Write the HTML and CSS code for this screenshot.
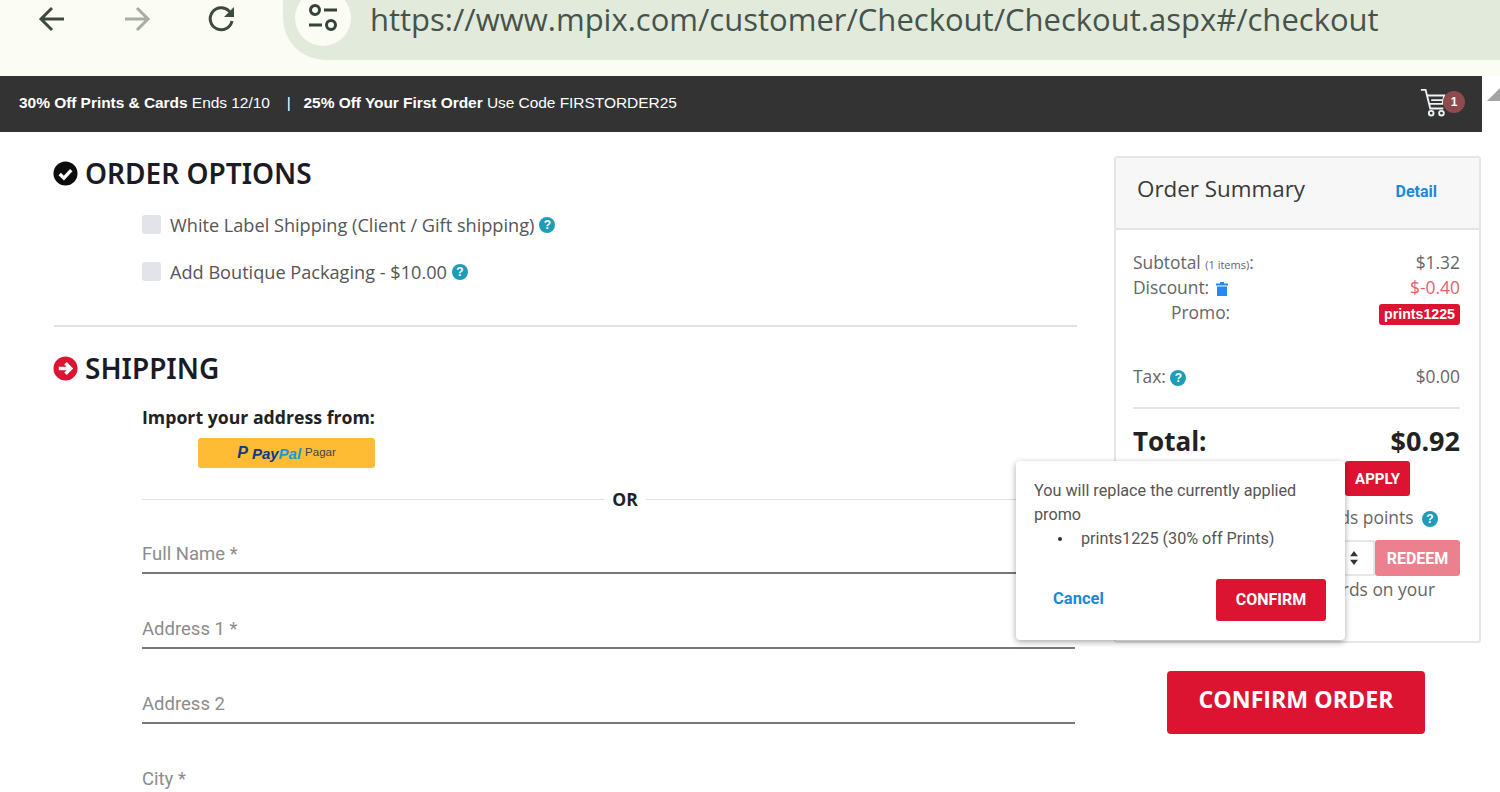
FILE: index.html
```html
<!DOCTYPE html>
<html lang="en">
<head>
<meta charset="utf-8">
<title>Checkout</title>
<link rel="stylesheet" href="styles.css">
</head>
<body>
<header class="chrome">
  <nav class="nav">
    <svg class="nav-icon" viewBox="0 0 30 30"><path d="M27 15H4M15 4 4 15l11 11"/></svg>
    <svg class="nav-icon dim" viewBox="0 0 30 30"><path d="M3 15h23M15 4l11 11-11 11"/></svg>
    <svg class="nav-icon" viewBox="0 0 30 30"><path d="M25 17a11 11 0 1 1-3-10l3 3"/><path class="solid" d="M27 3v10H17z"/></svg>
  </nav>
  <div class="omnibox">
    <span class="tune"><svg viewBox="0 0 32 32"><circle cx="8" cy="8" r="4.5"/><path d="M17 8h13M2 23h13"/><circle cx="24" cy="23" r="4.5"/></svg></span>
    <span class="url">https://www.mpix.com/customer/Checkout/Checkout.aspx#/checkout</span>
  </div>
</header>

<div class="promo-bar">
  <p class="promo-text"><b>30% Off Prints &amp; Cards</b> Ends 12/10 &nbsp;&nbsp; | &nbsp; <b>25% Off Your First Order</b> Use Code FIRSTORDER25</p>
  <div class="cart">
    <svg viewBox="0 0 30 32"><path d="M1 3h5l5 20h14M8 9h18l-2 9H10M12 14h13"/><circle cx="12" cy="28" r="2.5"/><circle cx="23" cy="28" r="2.5"/></svg>
    <span class="cart-badge">1</span>
  </div>
</div>
<div class="scroll-arrow"></div>

<main class="page">
  <section class="form-col">
    <h2 class="step first"><svg class="step-icon" viewBox="0 0 26 26"><circle cx="13" cy="13" r="12.5"/><path class="check" d="m7 13.5 4.300 4.300L19 9.500"/></svg>ORDER OPTIONS</h2>
    <div class="options">
      <label class="option"><span class="box"></span>White Label Shipping (Client / Gift shipping) <span class="help">?</span></label>
      <label class="option"><span class="box"></span>Add Boutique Packaging - $10.00 <span class="help">?</span></label>
    </div>
    <hr class="rule">
    <h2 class="step"><svg class="step-icon red" viewBox="0 0 26 26"><circle cx="13" cy="13" r="12.5"/><path class="check" d="M6 13h12M13 7.500l5.500 5.500-5.500 5.500"/></svg>SHIPPING</h2>
    <div class="shipping">
      <p class="import">Import your address from:</p>
      <div class="paypal"><span class="pp-mark">P</span><span class="pp-pay">Pay</span><span class="pp-pal">Pal</span><span class="pp-pagar">Pagar</span></div>
      <div class="or"><span>OR</span></div>
      <div class="field">Full Name *</div>
      <div class="field">Address 1 *</div>
      <div class="field">Address 2</div>
      <div class="field">City *</div>
    </div>
  </section>

  <aside class="side">
    <section class="card">
      <div class="card-head"><h3>Order Summary</h3><a class="link detail">Detail</a></div>
      <div class="card-body">
        <div class="row"><span>Subtotal <small>(1 items)</small>:</span><span>$1.32</span></div>
        <div class="row"><span>Discount: <svg class="trash" viewBox="0 0 12 14"><path d="M4 0h4v1.500h4v2H0v-2h4zM1 4.500h10V14H1z"/></svg></span><span class="neg">$-0.40</span></div>
        <div class="row promo-row"><span class="promo-label">Promo:</span><span class="chip">prints1225</span></div>
        <div class="row tax"><span>Tax: <span class="help">?</span></span><span>$0.00</span></div>
        <hr class="sum-rule">
        <div class="row total"><span>Total:</span><span class="total-value">$0.92</span></div>
        <div class="apply-row"><span class="btn apply">APPLY</span></div>
        <p class="reward">Redeem rewards points <span class="help">?</span></p>
        <div class="redeem-row"><span class="num"><svg viewBox="0 0 10 16"><path d="M5 0l4.500 6h-9zM5 16 .5 10h9z"/></svg></span><span class="btn redeem">REDEEM</span></div>
        <p class="reward-note">You have 0 rewards on your</p>
      </div>
    </section>
    <div class="confirm-wrap"><span class="btn confirm-order">CONFIRM ORDER</span></div>
  </aside>
</main>

<div class="popover">
  <p>You will replace the currently applied promo</p>
  <ul><li>prints1225 (30% off Prints)</li></ul>
  <div class="pop-actions"><a class="link cancel">Cancel</a><span class="btn pop-confirm">CONFIRM</span></div>
</div>
</body>
</html>
```
FILE: styles.css
```css
* { box-sizing: border-box; }
html, body { height: 792px; overflow: hidden; }
body { margin: 0; background: #fff; color: #333; font-family: "Open Sans", "Noto Sans", sans-serif; position: relative; }
p, h2, h3, ul { margin: 0; }

.chrome { height: 76px; background: #fbfdf5; display: flex; align-items: flex-start; overflow: hidden; }
.nav { display: flex; gap: 55px; padding: 4px 0 0 37px; width: 283px; flex: none; }
.nav-icon { width: 30px; height: 30px; fill: none; stroke: #3d4a40; stroke-width: 3; }
.nav-icon.dim { stroke: #a7aea6; }
.nav-icon .solid { fill: #3d4a40; stroke: none; }
.omnibox { flex: 1; min-width: 0; height: 60px; padding-left: 12px; background: #e2eadc; border-radius: 0 0 0 42px; display: flex; align-items: flex-start; }
.tune { width: 56px; height: 56px; margin-top: -10px; background: #fbfdf5; border-radius: 50%; display: flex; align-items: center; justify-content: center; flex: none; }
.tune svg { width: 32px; height: 32px; fill: none; stroke: #36423a; stroke-width: 3; }
.url { margin-left: 19px; font-size: 31px; line-height: 38px; color: #46534b; white-space: nowrap; }

.promo-bar { width: 1482px; height: 56px; background: #333; color: #fff; display: flex; align-items: center; justify-content: space-between; padding: 0 18px 0 19px; }
.promo-text { font: 15.5px/20px "Liberation Sans", sans-serif; letter-spacing: -.05px; white-space: pre; margin-top: -2px; }
.cart { position: relative; width: 44px; height: 34px; margin-top: -2px; }
.cart svg { width: 28px; height: 32px; fill: none; stroke: #eef4f6; stroke-width: 2; }
.cart-badge { position: absolute; left: 23px; top: 5px; width: 22px; height: 22px; border-radius: 50%; background: #8e4a4f; font: bold 12px/22px "Liberation Sans", sans-serif; text-align: center; }
.scroll-arrow { position: absolute; right: 0; top: 88px; width: 0; height: 0; border-left: 13px solid transparent; border-bottom: 13px solid #a3a3a3; }

.page { display: flex; padding: 24px 19px 0 54px; }
.form-col { width: 1023px; flex: none; }
.step { display: flex; align-items: center; gap: 7px; margin-left: -1px; height: 36px; font: 600 28px/36px "Noto Sans", sans-serif; color: #1b1b25; }
.step.first { margin-top: -1px; }
.step-icon { width: 25px; height: 25px; fill: #0c0c0c; flex: none; }
.step-icon.red { fill: #dc1432; }
.check { fill: none; stroke: #fff; stroke-width: 3.500; }
.options { padding: 10px 0 0 88px; }
.option { display: flex; align-items: center; height: 47px; font-size: 18.150px; color: #555; gap: 5px; }
.box { width: 19px; height: 19px; margin-right: 4px; border-radius: 3px; background: #e2e4ea; flex: none; }
.help { display: inline-block; width: 16px; height: 16px; border-radius: 50%; background: #1f9db8; color: #fff; font: bold 12px/16px "Liberation Sans", sans-serif; text-align: center; vertical-align: 1px; }
.rule { margin: 30px 0 0; border: 0; border-top: 2px solid #e2e2e2; }
.rule + .step { margin-top: 23px; }
.shipping { padding: 19px 0 0 88px; margin-right: 2px; }
.import { font-size: 17.7px; line-height: 24px; font-weight: 700; color: #222; }
.paypal { width: 177px; height: 30px; margin: 9px 0 0 56px; background: #fdbc33; border-radius: 3px; display: flex; align-items: center; justify-content: center; font: italic bold 15px/1 "Liberation Sans", sans-serif; }
.pp-mark { color: #0f3a86; margin-right: 4px; font-size: 16px; }
.pp-pay { color: #113984; }
.pp-pal { color: #169bd7; }
.pp-pagar { color: #444; font: 11.5px/1 "Liberation Sans", sans-serif; margin-left: 4px; }
.or { height: 1px; margin-top: 31px; background: #ddd; display: flex; justify-content: center; align-items: center; }
.or span { background: #fff; padding: 0 8px; margin: -2px 0 0 33px; font-size: 17.5px; font-weight: 700; color: #222; }
.field { height: 75px; border-bottom: 2px solid #777; font: 18.5px/24px Roboto, sans-serif; color: #8c8c8c; padding-top: 43px; }
.or + .field { height: 74px; padding-top: 42px; }
.field:last-child { border: 0; }

.side { width: 367px; margin-left: 37px; flex: none; }
.card { height: 487px; border: 2px solid #e6e6e6; border-radius: 3px; overflow: hidden; }
.card-head { height: 72px; background: #f7f7f7; border-bottom: 2px solid #e3e3e3; display: flex; align-items: center; justify-content: space-between; padding: 0 42px 8px 21px; }
.card-head h3 { font: 500 22.400px/28px "Open Sans", sans-serif; color: #3a3a3a; }
.detail { font-size: 16px; margin-top: 6px; }
.link { color: #1c87dc; font-family: Roboto, sans-serif; font-weight: 700; line-height: 20px; }
.card-body { padding: 20px 19px 0 17px; font-size: 17.4px; color: #666; }
.row { display: flex; justify-content: space-between; height: 25px; line-height: 25px; }
.row small { font-size: 11px; }
.trash { width: 12px; height: 14px; margin-left: 2px; fill: #2b86ee; vertical-align: -2px; }
.neg { color: #e65f6f; }
.promo-row { height: 24px; }
.promo-label { margin-left: 38px; }
.chip { height: 21px; margin-top: 4px; padding: 0 5px; background: #dc1432; color: #fff; border-radius: 3px; font: bold 14.200px/21px "Liberation Sans", sans-serif; }
.tax { margin-top: 40px; }
.sum-rule { margin: 18px 0 0; border: 0; border-top: 2px solid #e5e5e5; }
.total { height: 42px; margin-top: 11px; line-height: 42px; font-size: 26px; font-weight: 700; color: #222; }
.total-value { font-size: 27px; }
.btn { display: flex; align-items: center; justify-content: center; background: #dc1432; color: #fff; font-family: Roboto, sans-serif; font-weight: 700; border-radius: 3px; }
.apply-row { display: flex; height: 35px; margin-top: -1px; padding-left: 212px; }
.apply { width: 65px; height: 35px; font-size: 15px; }
.reward { margin-top: 7px; line-height: 28px; text-align: right; padding-right: 22px; white-space: nowrap; }
.reward .help { margin-left: 4px; }
.redeem-row { display: flex; justify-content: flex-end; height: 36px; margin-top: 9px; }
.num { width: 30px; border: 2px solid #e3e8f0; border-left: 0; display: flex; align-items: center; padding-left: 4px; }
.num svg { width: 10px; height: 14px; fill: #333; }
.redeem { width: 85px; background: #ec808e; font-size: 16px; }
.reward-note { margin-top: 0; line-height: 26px; white-space: nowrap; text-align: right; padding-right: 25px; }
.confirm-wrap { padding: 28px 56px 0 53px; }
.confirm-order { height: 63px; padding-bottom: 7px; font-size: 23.200px; border-radius: 4px; font-family: "Open Sans", sans-serif; }

.popover { position: absolute; left: 1016px; top: 461px; width: 329px; height: 179px; padding: 18px 18px 0; background: #fff; border-radius: 4px; box-shadow: 0 2px 6px rgba(0,0,0,.35); font: 16.200px/24px Roboto, sans-serif; color: #555; }
.popover ul { padding-left: 24px; list-style: none; }
.popover li { display: flex; align-items: center; gap: 19px; }
.popover li::before { content: ""; width: 4px; height: 4px; background: #333; border-radius: 50%; flex: none; }
.pop-actions { display: flex; justify-content: space-between; align-items: center; margin-top: 28px; padding: 0 1px 0 19px; }
.cancel { font-size: 16.500px; margin-bottom: 2px; }
.pop-confirm { width: 110px; height: 42px; font-size: 16px; }
```
